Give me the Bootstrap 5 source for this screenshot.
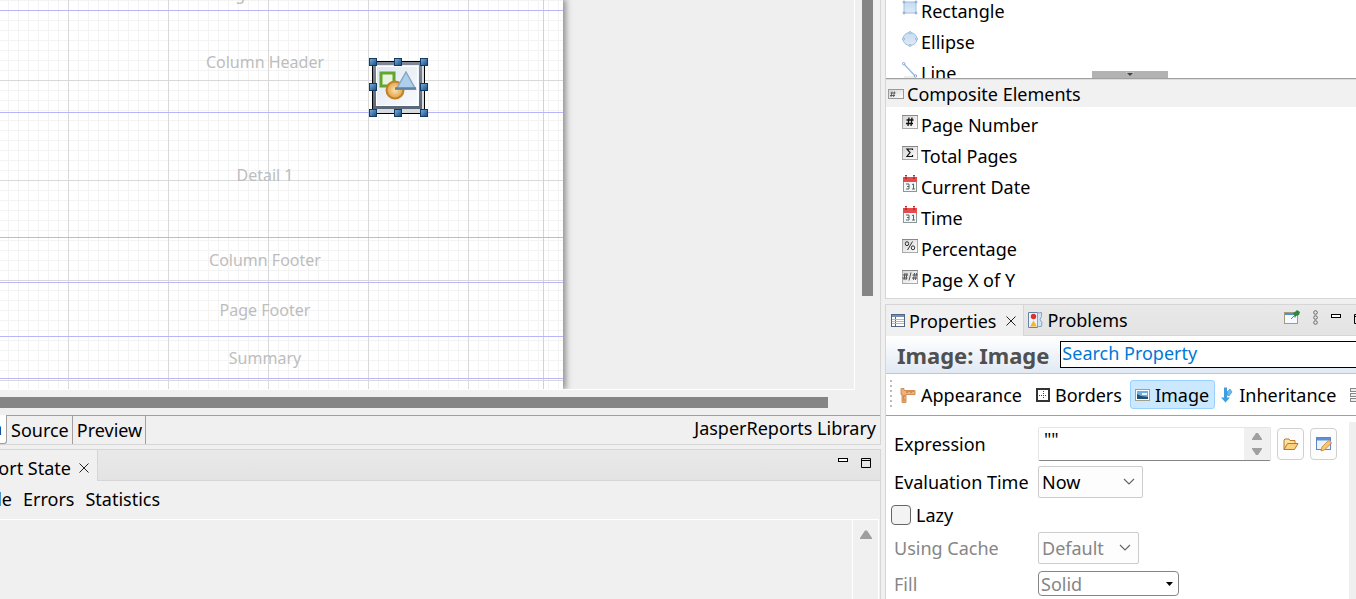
<!DOCTYPE html>
<html lang="en">
<head>
<meta charset="utf-8">
<meta name="viewport" content="width=device-width, initial-scale=1">
<title>Report Designer</title>
<link href="https://cdn.jsdelivr.net/npm/bootstrap@5.3.0/dist/css/bootstrap.min.css" rel="stylesheet">
<style>
  :root { --ui:#f0f0f0; --edge:#d6d6d6; --rule:#a0a0a0; }
  body { font-family:"Noto Sans","Open Sans",sans-serif; font-size:18px; line-height:24px; color:#000; background:var(--ui); }
  button, input, select, textarea { font:inherit; color:inherit; }
  svg { display:block; flex:none; }
  .plain-btn { border:0; background:none; padding:0; white-space:nowrap; }
  .sash { flex:0 0 4px; }

  /* editor */
  .editor { border-right:1px solid var(--edge); border-bottom:1px solid var(--edge); }
  .viewport { height:390px; margin-right:25px; border-right:1px solid #fff; border-bottom:1px solid #fff; background:#efefef; }
  .editor-canvas { height:415px; }
  .sheet { width:563px; height:389px; background-color:#fff; box-shadow:2px 0 6px 1px #909090;
    background-image:
      linear-gradient(90deg,#cfccf6 1px,transparent 1px),
      linear-gradient(90deg,#d9d9d9 1px,transparent 1px),
      linear-gradient(#d9d9d9 1px,transparent 1px),
      linear-gradient(90deg,#f3f3f3 1px,transparent 1px),
      linear-gradient(#f3f3f3 1px,transparent 1px);
    background-size:600px 100%,100px 100px,100px 100px,10px 10px,10px 10px;
    background-position:543px 0,68px 80px,68px 80px,8px 0,8px 0; }
  .band { border-bottom:1px solid #b9b5fb; padding-right:33px; color:#bdbdbd; font-size:16px; flex:none; }
  .band-page-header { height:34px; margin-top:-23px; }
  .band-column-header { height:102px; }
  .band-detail { height:125px; }
  .band-column-footer { height:45px; }
  .band-page-footer { height:54px; }
  .band-summary { height:42px; }
  .picked { left:368px; top:57px; }
  .bar-v { top:0; right:7px; width:11px; height:296px; background:#858585; }
  .bar-h { left:0; right:52px; top:397px; height:11px; background:#858585; }
  .page-tabs { height:29px; border-top:1px solid var(--rule); }
  .page-tabs button { border-right:1px solid var(--rule); padding:0 3px 0 4px; line-height:26px; }
  .page-tabs .current { width:7px; padding:0 4px 0 0; background:#fff; border-bottom:1px solid var(--rule); border-bottom-right-radius:3px; margin-top:-1px; }

  /* view stacks */
  .stack { border:1px solid var(--edge); border-bottom:0; }
  .stack-head { height:31px; background:linear-gradient(#e9e9e9,#e3e3e3); }
  .stack-head .rest { border-bottom:1px solid var(--edge); }
  .stack-head .active { background:var(--ui); border-right:1px solid var(--edge); }
  .report-state { border-left:0; margin-top:4px; }
  .state-tab { width:98px; padding:4px 8px 0 0; }
  .close-view { margin-left:10px; }
  .window-btns { gap:13px; padding:8px 9px 0 0; }
  .state-bar { gap:11px; padding:6px 0 8px; }
  .state-bar .first { width:12px; }
  .console { border-top:1px solid #fff; border-right:1px solid #fff; margin-right:1px; }
  .console-bar { width:26px; border-left:1px solid #fff; padding-top:10px; }

  /* right side */
  .side { flex:0 1 471px; }
  .palette { border-left:1px solid var(--edge); border-bottom:1px solid var(--edge); background:#fff; height:299px; flex:none; }
  .palette-top { height:79px; border-bottom:1px solid var(--rule); }
  .palette-top ul { margin-top:-5px; }
  .tool { height:31px; padding-left:16px; gap:3px; }
  .tool svg { margin-bottom:6px; }
  .drawer { height:28px; border-top:1px solid #dcdcdc; background:#f1f1f1; padding-left:2px; gap:3px; width:100%; }
  .drawer-items { padding-top:2px; }
  .more { left:206px; bottom:0; width:76px; height:7px; background:#b2b2b2; }
  .props { margin-top:5px; border-right:0; background:#fff; }
  .props .active { padding:0 7px 0 5px; }
  .view-tools { padding-top:5px; gap:9px; }
  .props-title { height:38px; background:linear-gradient(#fff,#e1e9f3); border-bottom:1px solid #b4c8de; padding-left:11px; gap:11px; }
  .props-title h1 { font-size:22px; line-height:30px; font-weight:700; color:#505050; white-space:nowrap; }
  .search { height:27px; min-width:0; border:1px solid #000; border-right:0; padding:0 1px 3px; }
  .search::placeholder { color:#0078d7; opacity:1; }
  .sections { height:42px; border-bottom:1px solid var(--rule); }
  .grip { width:2px; height:30px; margin:0 8px 0 4px; background:repeating-linear-gradient(#bbb 0 2px,transparent 2px 5px); flex:none; }
  .sections button { height:29px; gap:5px; padding:0 8px 0 6px; }
  .sections .on { background:#cce8ff; border:1px solid #99d1ff; border-radius:3px; padding:0 5px 0 4px; }

  .fields { padding:11px 12px 0 5px; min-width:0; }
  .field-name { flex:0 0 147px; padding-left:3px; }
  .expr-row { gap:6px; }
  .expr { flex:1 1 0; height:34px; margin-left:-6px; border:1px solid #e5e5e5; border-bottom-color:#858585; border-radius:2px; min-width:0; }
  .expr textarea { flex:1 1 0; border:0; resize:none; padding:0 5px; height:32px; min-width:0; line-height:22px; overflow:hidden; }
  .spin { width:26px; background:var(--ui); padding:5px 0; }
  .tile { width:27px; height:32px; border:1px solid #d0d0d0; border-radius:4px; background:#fdfdfd; padding:0; }
  .time-row { padding-top:5px; }
  .lazy-row { height:34px; gap:5px; }
  .fill-row { padding-top:7px; }
  .drop { appearance:none; height:32px; border:1px solid #ccc; border-radius:2px; padding:0 3px; background:#fdfdfd url("data:image/svg+xml,%3Csvg xmlns='http://www.w3.org/2000/svg' width='12' height='8'%3E%3Cpath d='M1 1l5 5 5-5' fill='none' stroke='%23666' stroke-width='1.2'/%3E%3C/svg%3E") no-repeat right 7px center; }
  .drop-time { width:105px; }
  .drop-cache { width:101px; }
  .drop-fill { width:141px; height:25px; padding:0 2px; border-color:#858585; border-radius:4px; background:#fff url("data:image/svg+xml,%3Csvg xmlns='http://www.w3.org/2000/svg' width='7' height='4'%3E%3Cpath d='M0 0h7L3.500 4z'/%3E%3C/svg%3E") no-repeat right 5px center; }
  .off, .off select { color:#868686; opacity:1; }
  .tick { appearance:none; width:20px; height:20px; margin:0; border:1px solid #666; border-radius:4px; background:#f3f3f3; }
  .gutter { width:7px; margin-top:6px; background:#efefef; flex:none; }
</style>
</head>
<body>
<svg width="0" height="0" class="position-absolute" aria-hidden="true">
  <defs>
    <linearGradient id="blue" x2="1" y2="1"><stop stop-color="#79b4e4"/><stop offset="1" stop-color="#174a7c"/></linearGradient>
    <linearGradient id="frame" x2="0" y2="1"><stop stop-color="#7d8998"/><stop offset="1" stop-color="#5a6878"/></linearGradient>
    <linearGradient id="sky" x2="1" y2="1"><stop stop-color="#dce5ef"/><stop offset="1" stop-color="#fafcff"/></linearGradient>
    <linearGradient id="glass" x2="0" y2="1"><stop stop-color="#c3dcf3"/><stop offset="1" stop-color="#dfeaf5"/></linearGradient>
    <linearGradient id="key" x2="1" y2="1"><stop stop-color="#d4d4d4"/><stop offset="1" stop-color="#fff"/></linearGradient>
    <radialGradient id="gold"><stop stop-color="#fde3b0"/><stop offset="1" stop-color="#e3a041"/></radialGradient>
    <symbol id="knob" viewBox="0 0 8 8"><rect x=".5" y=".5" width="7" height="7" fill="url(#blue)" stroke="#123a63"/></symbol>
    <symbol id="keybox" viewBox="0 0 16 14"><rect x=".5" y=".5" width="15" height="13" fill="url(#key)" stroke="#aaa"/><path d="M0 .5h16" stroke="#888"/></symbol>
    <symbol id="cal" viewBox="0 0 16 17"><rect x="1.500" y="3" width="13" height="13.500" fill="#f3f7f7" stroke="#8d9797"/><path d="M1 2h14v5H1z" fill="#e84b4b"/><path d="M4 0v4M12 0v4" stroke="#b92e2e" stroke-width="2"/><path d="M3.500 1.500h1M11.500 1.500h1" stroke="#fff"/><path d="M4 9h3v5H4M5 11.500h2M10 9.500l1.500-.5v5M10 14h3" fill="none" stroke="#566"/></symbol>
    <symbol id="min" viewBox="0 0 10 4"><rect x=".5" y=".5" width="9" height="3" fill="#fff" stroke="#000"/></symbol>
    <symbol id="max" viewBox="0 0 10 10"><path d="M.5.5h9v9h-9zM0 2.500h10" fill="none" stroke="#000"/></symbol>
    <symbol id="x" viewBox="0 0 10 10"><path d="M.5.5l9 9M9.500.5l-9 9" fill="none" stroke="#222"/></symbol>
  </defs>
</svg>

<div class="d-flex vh-100 overflow-hidden">
  <main class="d-flex flex-column flex-fill overflow-hidden">
    <section class="editor flex-shrink-0">
      <div class="editor-canvas position-relative">
        <div class="viewport overflow-hidden">
          <div class="sheet d-flex flex-column">
            <div class="band band-page-header d-flex align-items-center justify-content-center">Page Header</div>
            <div class="band band-column-header d-flex align-items-center justify-content-center">Column Header</div>
            <div class="band band-detail d-flex align-items-center justify-content-center">Detail 1</div>
            <div class="band band-column-footer d-flex align-items-center justify-content-center">Column Footer</div>
            <div class="band band-page-footer d-flex align-items-center justify-content-center">Page Footer</div>
            <div class="band band-summary d-flex align-items-center justify-content-center">Summary</div>
          </div>
        </div>
        <svg class="picked position-absolute" width="61" height="61" role="img" aria-label="Image element">
          <rect x="4.500" y="4.500" width="52" height="52" fill="#d9dbe0" stroke="#000"/>
          <rect x="6.500" y="6.500" width="46" height="44" fill="url(#sky)" stroke="url(#frame)" stroke-width="3"/>
          <rect x="8.500" y="9.500" width="41" height="39" fill="none" stroke="#fff"/>
          <rect x="13" y="16" width="13" height="13" fill="#e8f4df" stroke="#64a431" stroke-width="3"/>
          <circle cx="27" cy="33" r="8.500" fill="url(#gold)" stroke="#c08029" stroke-width="2"/>
          <path d="M38 15l9.500 17h-19z" fill="#acd0ec" stroke="#8aa7c1" stroke-width="1.500"/>
          <path d="M27 31.500h21" stroke="#60829f" stroke-width="2.500"/>
          <use href="#knob" x="1" y="1" width="8" height="8"/><use href="#knob" x="26" y="1" width="8" height="8"/><use href="#knob" x="52" y="1" width="8" height="8"/>
          <use href="#knob" x="1" y="26" width="8" height="8"/><use href="#knob" x="52" y="26" width="8" height="8"/>
          <use href="#knob" x="1" y="52" width="8" height="8"/><use href="#knob" x="26" y="52" width="8" height="8"/><use href="#knob" x="52" y="52" width="8" height="8"/>
        </svg>
        <div class="bar-v position-absolute"></div>
        <div class="bar-h position-absolute"></div>
      </div>
      <div class="page-tabs d-flex">
        <button class="plain-btn current d-flex justify-content-end overflow-hidden" type="button">n</button>
        <button class="plain-btn" type="button">Source</button>
        <button class="plain-btn" type="button">Preview</button>
        <span class="ms-auto pe-1">JasperReports Library</span>
      </div>
    </section>

    <section class="stack report-state d-flex flex-column flex-fill">
      <div class="stack-head d-flex flex-shrink-0">
        <div class="active state-tab d-flex align-items-center justify-content-end overflow-hidden">
          <button class="plain-btn" type="button">ort State</button>
          <button class="plain-btn ms-2" type="button" aria-label="Close Report State"><svg width="10" height="10"><use href="#x"/></svg></button>
        </div>
        <div class="rest window-btns d-flex flex-fill justify-content-end align-items-start">
          <button class="plain-btn" type="button" aria-label="Minimize"><svg width="10" height="4"><use href="#min"/></svg></button>
          <button class="plain-btn" type="button" aria-label="Maximize"><svg width="10" height="10"><use href="#max"/></svg></button>
        </div>
      </div>
      <div class="state-bar d-flex flex-shrink-0">
        <button class="plain-btn first d-flex justify-content-end" type="button">le</button>
        <button class="plain-btn" type="button">Errors</button>
        <button class="plain-btn" type="button">Statistics</button>
      </div>
      <div class="console d-flex flex-fill">
        <div class="console-bar ms-auto d-flex justify-content-center"><svg width="12" height="9"><path d="M0 9V8l5-7.500h2L12 8v1z" fill="#9f9f9f"/></svg></div>
      </div>
    </section>
  </main>

  <div class="sash"></div>

  <aside class="side d-flex flex-column overflow-hidden">
    <section class="palette">
      <div class="palette-top position-relative overflow-hidden">
        <ul class="list-unstyled mb-0">
          <li class="tool d-flex align-items-center"><svg width="16" height="16"><rect x="2" y="2" width="12" height="11" fill="url(#glass)" stroke="#a3bddc"/><g fill="#fff" stroke="#7ea2cf"><circle cx="2" cy="2" r="1"/><circle cx="14" cy="2" r="1"/><circle cx="2" cy="13" r="1"/><circle cx="14" cy="13" r="1"/></g></svg>Rectangle</li>
          <li class="tool d-flex align-items-center"><svg width="16" height="16"><ellipse cx="8" cy="8" rx="7" ry="6.500" fill="url(#glass)" stroke="#a3bddc"/><g fill="#fff" stroke="#7ea2cf" stroke-width=".8"><circle cx="8" cy="1.500" r="1"/><circle cx="8" cy="14.500" r="1"/><circle cx="1.500" cy="8" r="1"/><circle cx="14.500" cy="8" r="1"/></g></svg>Ellipse</li>
          <li class="tool d-flex align-items-center"><svg width="16" height="16"><path d="M2 15h11" stroke="#eee" stroke-width="2"/><path d="M2 2l11 12" stroke="#98b7db" stroke-width="1.200"/><g fill="#fff" stroke="#7ea2cf"><circle cx="1.700" cy="1.700" r="1.200"/><circle cx="13.500" cy="14" r="1.200"/></g></svg>Line</li>
        </ul>
        <button class="more plain-btn position-absolute d-flex justify-content-center align-items-center" type="button" aria-label="Scroll down"><svg width="8" height="5"><path d="M0 .5h8L4 4.500z" fill="#444" stroke="#fff" stroke-width=".5"/></svg></button>
      </div>
      <button class="drawer plain-btn d-flex align-items-center" type="button"><svg width="16" height="10"><rect x=".5" y=".5" width="15" height="9" fill="url(#key)" stroke="#999"/><path d="M4 2.500L3 8M6.500 2.500L5.500 8M2.500 4h5M2 6.500h5" stroke="#444" stroke-width=".8"/></svg>Composite Elements</button>
      <ul class="drawer-items list-unstyled mb-0">
        <li class="tool d-flex align-items-center"><svg width="16" height="14"><use href="#keybox"/><path d="M7 2.500L6 11M10 2.500L9 11M4.500 5h7M4 8.500h7" stroke="#111" stroke-width="1.300"/></svg>Page Number</li>
        <li class="tool d-flex align-items-center"><svg width="16" height="14"><use href="#keybox"/><path d="M10.500 4V3H5l3 3.500L5 10.500h5.500V9" fill="none" stroke="#111" stroke-width="1.200"/></svg>Total Pages</li>
        <li class="tool d-flex align-items-center"><svg width="16" height="17"><use href="#cal"/></svg>Current Date</li>
        <li class="tool d-flex align-items-center"><svg width="16" height="17"><use href="#cal"/></svg>Time</li>
        <li class="tool d-flex align-items-center"><svg width="16" height="14"><use href="#keybox"/><path d="M10.500 2.500L5.500 11" stroke="#333"/><ellipse cx="5" cy="4.700" rx="1.700" ry="2" fill="none" stroke="#333"/><ellipse cx="11" cy="8.800" rx="1.700" ry="2" fill="none" stroke="#333"/></svg>Percentage</li>
        <li class="tool d-flex align-items-center"><svg width="16" height="14"><use href="#keybox"/><path d="M3 3L2 10M5 3L4 10M1 5h5M.5 8h5M9 2.500L7 10.500M12.500 3l-1 7M14.500 3l-1 7M10.500 5h5M10 8h5" stroke="#444" stroke-width=".9"/></svg>Page X of Y</li>
      </ul>
    </section>

    <section class="props stack d-flex flex-column flex-fill">
      <div class="stack-head d-flex flex-shrink-0">
        <div class="active d-flex align-items-center">
          <svg width="14" height="13" class="me-1"><rect x=".5" y=".5" width="13" height="12" fill="#fff" stroke="#51657f"/><path d="M1 1h12v2H1z" fill="#7391b8"/><path d="M4.500 3v9" stroke="#51657f"/><path d="M1 5.500h12M1 7.500h12M1 9.500h12" stroke="#a9b9cf"/></svg>
          <button class="plain-btn" type="button">Properties</button>
          <button class="plain-btn close-view" type="button" aria-label="Close Properties"><svg width="10" height="10"><use href="#x"/></svg></button>
        </div>
        <div class="rest d-flex flex-fill">
          <button class="plain-btn d-flex align-items-center ps-1" type="button">
            <svg width="15" height="16" class="me-1"><path d="M.5.500h9v15h-9z" fill="#eef4fb" stroke="#6684a8"/><path d="M9.500 1l4-.5v4l-1.500 3 2 3-.5 4h-4z" fill="#d5e2f2" stroke="#8aa1bf"/><circle cx="5.500" cy="4.500" r="2.700" fill="#d8332f"/><path d="M5.500 8.500l3.500 6H2z" fill="#f5b335"/></svg>Problems</button>
          <div class="view-tools ms-auto d-flex align-items-start">
            <button class="plain-btn me-1" type="button" aria-label="Pin view"><svg width="16" height="14"><rect x=".5" y="2.500" width="13" height="11" fill="#f7fbff" stroke="#a59b78"/><path d="M1 3h12v2H1z" fill="#4e93ce"/><path d="M7 9l3-3" stroke="#777"/><path d="M9 3l2 5 1-2 3-1 1-3-3-2-2 2z" fill="#2c8b42"/></svg></button>
            <button class="plain-btn me-1" type="button" aria-label="View menu"><svg width="5" height="15"><g fill="none" stroke="#666"><circle cx="2.500" cy="2.500" r="1.800"/><circle cx="2.500" cy="7.500" r="1.800"/><circle cx="2.500" cy="12.500" r="1.800"/></g></svg></button>
            <button class="plain-btn mt-1 me-1" type="button" aria-label="Minimize"><svg width="10" height="4"><use href="#min"/></svg></button>
            <button class="plain-btn mt-1" type="button" aria-label="Maximize"><svg width="2" height="10" viewBox="0 0 2 10"><path d="M2 .5H.5v9H2M0 2.500h2" fill="none" stroke="#000"/></svg></button>
          </div>
        </div>
      </div>
      <div class="props-title d-flex align-items-center flex-shrink-0">
        <h1 class="mb-0">Image: Image</h1>
        <input class="search flex-fill rounded-0" type="text" placeholder="Search Property" aria-label="Search Property">
      </div>
      <div class="sections d-flex align-items-center flex-shrink-0 overflow-hidden">
        <span class="grip"></span>
        <button class="plain-btn d-flex align-items-center ps-0" type="button"><svg width="16" height="16"><path d="M1 1.500h3v2h11v4H6v8H2v-8H1z" fill="#f0b27a" stroke="#c77b3c" stroke-width=".8"/><path d="M7 4v2M9 4v1M11 4v2M13 4v1M3 9h2M3 11h1M3 13h2" stroke="#9c5a22" stroke-width=".8"/></svg>Appearance</button>
        <button class="plain-btn d-flex align-items-center" type="button"><svg width="14" height="14"><rect x="1" y="1" width="12" height="12" fill="#fff" stroke="#333" stroke-width="2"/><path d="M7.500 3v8M3 7.500h8" stroke="#444" stroke-dasharray="1 1"/></svg>Borders</button>
        <button class="plain-btn on d-flex align-items-center" type="button"><svg width="15" height="12"><rect x=".5" y=".5" width="14" height="11" fill="#fff" stroke="#a1a18b"/><path d="M2 2h11v8H2z" fill="#65b0e8"/><path d="M2 5l4 2 7 1v2H2z" fill="#214e73"/><path d="M7 5h5" stroke="#e8f5ff" stroke-width="2"/></svg>Image</button>
        <button class="plain-btn d-flex align-items-center" type="button"><svg width="13" height="16"><path d="M3 .5h3v10h3L4.500 15.500 0 10.500h3z" fill="#3f9ee0"/><path d="M6 8V5l3-3 2 3-3 4z" fill="#6cb9ee" stroke="#3588c8" stroke-width=".6"/></svg>Inheritance</button>
        <button class="plain-btn d-flex align-items-center" type="button" aria-label="Advanced"><svg width="16" height="16"><g fill="#eee" stroke="#888"><rect x=".5" y="1.500" width="15" height="3"/><rect x=".5" y="6.500" width="15" height="3"/><rect x=".5" y="11.500" width="15" height="3"/></g></svg></button>
      </div>
      <div class="d-flex flex-fill">
        <form class="fields flex-fill">
          <div class="expr-row d-flex align-items-center">
            <label class="field-name" for="expr">Expression</label>
            <div class="expr d-flex">
              <textarea id="expr" rows="1">""</textarea>
              <div class="spin d-flex flex-column align-items-center justify-content-between"><svg width="10" height="7"><path d="M0 7V6l4-6h2l4 6v1z" fill="#a0a0a0"/></svg><svg width="10" height="7"><path d="M0 0v1l4 6h2l4-6V0z" fill="#a0a0a0"/></svg></div>
            </div>
            <button class="tile d-flex align-items-center justify-content-center" type="button" aria-label="Open expression"><svg width="16" height="13"><path d="M1 11.500V2l1-1h4l1 1.500h5V5" fill="#fbe3a5" stroke="#b9782c"/><path d="M1 11.500L4.500 5.500H15l-3.500 6z" fill="#fcd27c" stroke="#b9782c"/></svg></button>
            <button class="tile d-flex align-items-center justify-content-center" type="button" aria-label="Edit expression"><svg width="16" height="16"><rect x=".5" y="1.500" width="14" height="12" fill="#eaf3fc" stroke="#5c87c4"/><path d="M1 2h13v2.500H1z" fill="#5c8fd6"/><path d="M5 15l1-4 6.500-6.500 3 2.500L8.500 14z" fill="#f9c66b" stroke="#c0833a" stroke-width=".8"/><path d="M12.500 4.500l3 2.500" stroke="#e98" stroke-width="1.500"/></svg></button>
          </div>
          <div class="time-row d-flex align-items-center">
            <label class="field-name" for="evaltime">Evaluation Time</label>
            <select id="evaltime" class="drop drop-time"><option>Now</option></select>
          </div>
          <div class="lazy-row d-flex align-items-center">
            <input id="lazy" class="tick" type="checkbox"><label for="lazy">Lazy</label>
          </div>
          <div class="off d-flex align-items-center">
            <label class="field-name" for="cache">Using Cache</label>
            <select id="cache" class="drop drop-cache" disabled><option>Default</option></select>
          </div>
          <div class="off fill-row d-flex align-items-center">
            <label class="field-name" for="fill">Fill</label>
            <select id="fill" class="drop drop-fill" disabled><option>Solid</option></select>
          </div>
        </form>
        <div class="gutter"></div>
      </div>
    </section>
  </aside>
</div>
<script src="https://cdn.jsdelivr.net/npm/bootstrap@5.3.0/dist/js/bootstrap.bundle.min.js"></script>
</body>
</html>
